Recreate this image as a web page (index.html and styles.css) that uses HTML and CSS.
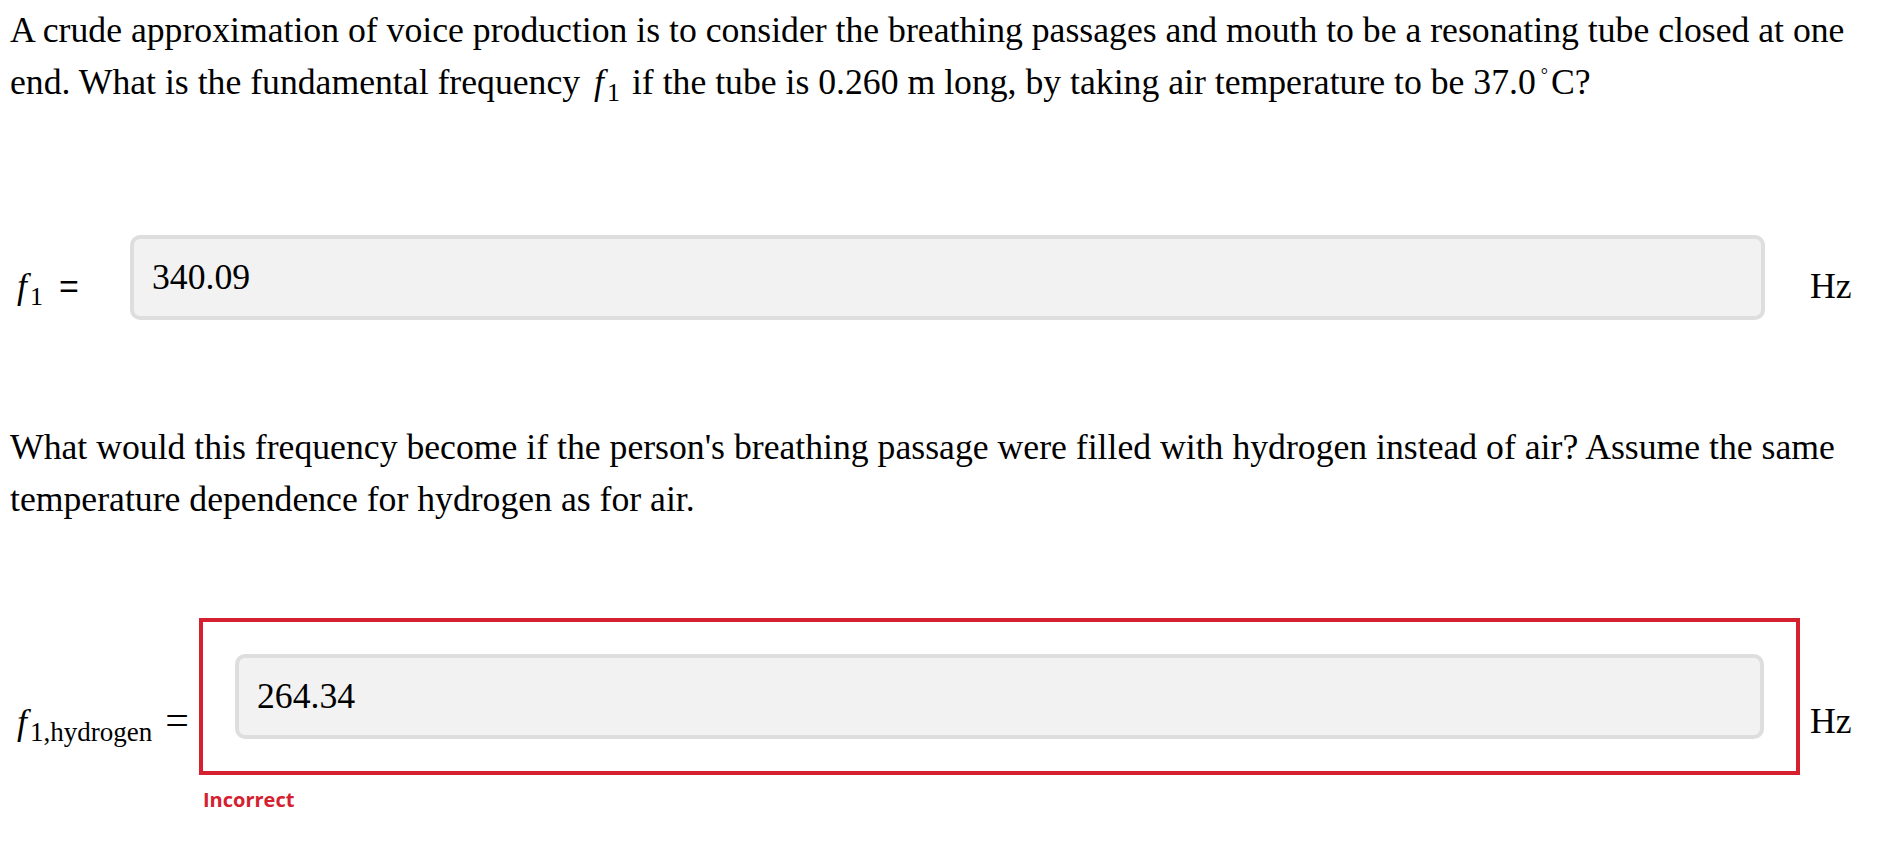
FILE: index.html
```html
<!DOCTYPE html>
<html lang="en">
<head>
    <meta charset="UTF-8">
    <title>Fundamental Frequency</title>
    <link rel="stylesheet" href="styles.css">
</head>
<body>
    <div class="question">
        <p class="prompt first">A crude approximation of voice production is to consider the breathing passages and mouth to be a resonating tube closed at one end. What is the fundamental frequency <span class="var"><i>f</i><sub>1</sub></span> if the tube is 0.260&nbsp;m long, by taking air temperature to be 37.0<span class="deg">&deg;</span>C?</p>

        <div class="answer-row row-one">
            <div class="label"><span class="var"><i>f</i><sub>1</sub></span><span class="eq eq-small">=</span></div>
            <input type="text" class="answer-field" value="340.09" readonly>
            <div class="unit">Hz</div>
        </div>

        <p class="prompt second">What would this frequency become if the person's breathing passage were filled with hydrogen instead of air? Assume the same temperature dependence for hydrogen as for air.</p>

        <div class="answer-row row-two">
            <div class="label"><span class="var"><i>f</i><sub>1,hydrogen</sub></span><span class="eq">=</span></div>
            <div class="wrong-box">
                <input type="text" class="answer-field" value="264.34" readonly>
            </div>
            <div class="unit">Hz</div>
        </div>
        <div class="feedback">Incorrect</div>
    </div>
</body>
</html>
```

FILE: styles.css
```css
body {
    margin: 0;
    padding: 4px 0 0 10px;
    background-color: #ffffff;
    color: #000000;
    font-family: "Liberation Serif", "Times New Roman", serif;
    font-size: 35.7px;
    line-height: 52px;
}
.prompt {
    margin: 0;
}
.prompt.second {
    margin-top: 101px;
}
.var i {
    padding-left: 7px;
    padding-right: 3px;
}
.prompt .var i {
    padding-left: 5px;
    padding-right: 3px;
}
.prompt .var {
    margin-right: 3px;
}
.var sub {
    font-size: 26px;
    line-height: 1;
    vertical-align: -7px;
}
.row-two .var sub {
    font-size: 27px;
}
.deg {
    font-size: 18px;
    vertical-align: 13px;
    line-height: 1;
    padding: 0 3px 0 5px;
}
.answer-row {
    display: flex;
    align-items: center;
}
.row-one {
    margin-top: 127px;
}
.row-two {
    margin-top: 93px;
}
.label {
    display: flex;
    align-items: baseline;
    flex-shrink: 0;
}
.row-one .label {
    width: 120px;
    padding-top: 16px;
}
.row-two .label {
    width: 189px;
    padding-top: 48px;
}
.eq {
    margin-left: 13px;
    font-size: 42px;
}
.eq-small {
    font-family: "Liberation Sans", Arial, sans-serif;
    font-size: 34px;
    margin-left: 16px;
}
.answer-field {
    flex: 1;
    min-width: 0;
    height: 85px;
    box-sizing: border-box;
    padding: 0 18px 2px;
    background-color: #f2f2f2;
    border: 4px solid #dedede;
    border-radius: 10px;
    font-family: "Liberation Serif", "Times New Roman", serif;
    font-size: 35.7px;
    color: #000000;
    outline: none;
}
.wrong-box {
    flex: 1;
    display: flex;
    padding: 32px;
    border: 4px solid #d4202f;
}
.wrong-box .answer-field {
    width: 100%;
}
.unit {
    width: 70px;
    flex-shrink: 0;
}
.row-one .unit {
    margin-left: 45px;
    padding-top: 16px;
}
.row-two .unit {
    margin-left: 10px;
    padding-top: 48px;
}
.feedback {
    margin: 10px 0 0 193px;
    color: #d4202f;
    font-family: "Open Sans", Arial, sans-serif;
    font-weight: 700;
    font-size: 20px;
    line-height: 30px;
}
```
